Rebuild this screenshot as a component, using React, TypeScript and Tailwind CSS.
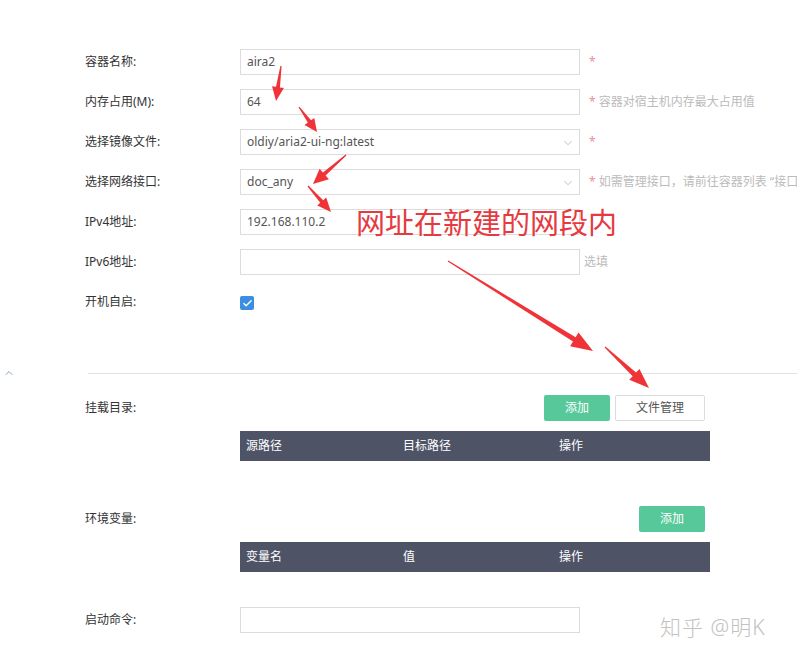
import { ChevronDown, ChevronUp, Check } from 'lucide-react'

const FONT = { fontFamily: '"Noto Sans", "Noto Sans CJK SC", sans-serif' }

type Arrow = { x1: number; y1: number; x2: number; y2: number; head: number; hw: number; sw: number }

// red annotation arrows drawn over the form
const ARROWS: Arrow[] = [
  { x1: 281, y1: 66, x2: 276, y2: 101, head: 14, hw: 12, sw: 4 },
  { x1: 299, y1: 107, x2: 317, y2: 132, head: 13, hw: 12, sw: 4 },
  { x1: 346, y1: 155, x2: 313, y2: 184, head: 15, hw: 14, sw: 4 },
  { x1: 308, y1: 186, x2: 331, y2: 212, head: 14, hw: 12, sw: 4 },
  { x1: 448, y1: 261, x2: 593, y2: 351, head: 22, hw: 16, sw: 5 },
  { x1: 605, y1: 347, x2: 649, y2: 388, head: 20, hw: 15, sw: 5 },
]

function arrowPoints(a: Arrow) {
  const dx = a.x2 - a.x1
  const dy = a.y2 - a.y1
  const len = Math.hypot(dx, dy)
  const ux = dx / len
  const uy = dy / len
  const nx = -uy
  const ny = ux
  const bx = a.x2 - ux * a.head
  const by = a.y2 - uy * a.head
  const pts = [
    [a.x1 + nx * 0.6, a.y1 + ny * 0.6],
    [bx + (nx * a.sw) / 2, by + (ny * a.sw) / 2],
    [bx + (nx * a.hw) / 2, by + (ny * a.hw) / 2],
    [a.x2, a.y2],
    [bx - (nx * a.hw) / 2, by - (ny * a.hw) / 2],
    [bx - (nx * a.sw) / 2, by - (ny * a.sw) / 2],
    [a.x1 - nx * 0.6, a.y1 - ny * 0.6],
  ]
  return pts.map(p => p.join(',')).join(' ')
}

function Label({ children }: { children: React.ReactNode }) {
  return <div className="w-[155px] shrink-0 text-[12px] text-[#333]">{children}</div>
}

function Field({
  label,
  value,
  select,
  hint,
}: {
  label: string
  value?: string
  select?: boolean
  hint?: React.ReactNode
}) {
  return (
    <div className="flex items-center h-[26px]">
      <Label>{label}</Label>
      <div className="relative w-[340px] h-[26px] shrink-0 border border-[#dcdcdc] bg-white flex items-center pl-[6px] text-[12px] text-[#555]">
        {value}
        {select && (
          <ChevronDown className="absolute right-[4px] top-[6px] text-[#a8a8a8]" size={14} strokeWidth={1.2} />
        )}
      </div>
      {hint && <div className="ml-[9px] text-[12px] text-[#bbb] whitespace-nowrap">{hint}</div>}
    </div>
  )
}

const Star = () => <span className="text-[#ee8d9a]">*</span>

export default function App() {
  return (
    <div className="relative w-[797px] h-[661px] overflow-hidden bg-white" style={FONT}>
      <div className="pl-[85px] pt-[49px] flex flex-col gap-[14px]">
        <Field label="容器名称:" value="aira2" hint={<Star />} />
        <Field label="内存占用(M):" value="64" hint={<><Star /> 容器对宿主机内存最大占用值</>} />
        <Field label="选择镜像文件:" value="oldiy/aria2-ui-ng:latest" select hint={<Star />} />
        <Field
          label="选择网络接口:"
          value="doc_any"
          select
          hint={<><Star /> 如需管理接口，请前往容器列表 “接口</>}
        />
        <Field label="IPv4地址:" value="192.168.110.2" />
        <div className="flex items-center h-[26px]">
          <Label>IPv6地址:</Label>
          <div className="w-[340px] h-[26px] shrink-0 border border-[#dcdcdc]" />
          <div className="ml-[4px] text-[12px] text-[#bbb]">选填</div>
        </div>
        <div className="flex items-center h-[26px]">
          <Label>开机自启:</Label>
          <div className="w-[14px] h-[14px] mt-[2px] rounded-[2px] bg-[#3c8ee0] flex items-center justify-center">
            <Check size={11} strokeWidth={3} className="text-white" />
          </div>
        </div>
      </div>

      <div className="flex items-center mt-[57px] h-[2px]">
        <ChevronUp size={12} strokeWidth={2} className="ml-[3px] text-[#7fa6c9]" />
        <div className="ml-[73px] flex-1 h-px bg-[#e2e2e2]" />
      </div>

      {/* 挂载目录 */}
      <div className="pl-[85px] mt-[21px] flex items-center h-[26px]">
        <Label>挂载目录:</Label>
        <div className="w-[470px] flex justify-end gap-[5px] pr-[5px]">
          <button className="w-[66px] h-[26px] rounded-[2px] bg-[#57c89a] text-white text-[12px]">添加</button>
          <button className="w-[90px] h-[26px] rounded-[2px] border border-[#dcdcdc] bg-white text-[#555] text-[12px]">
            文件管理
          </button>
        </div>
      </div>
      <div className="ml-[240px] mt-[10px] w-[470px] h-[30px] bg-[#4e5366] grid grid-cols-[157px_156px_1fr] items-center pl-[6px] text-[12px] text-white">
        <span>源路径</span>
        <span>目标路径</span>
        <span>操作</span>
      </div>

      {/* 环境变量 */}
      <div className="pl-[85px] mt-[45px] flex items-center h-[26px]">
        <Label>环境变量:</Label>
        <div className="w-[470px] flex justify-end pr-[5px]">
          <button className="w-[66px] h-[26px] rounded-[2px] bg-[#57c89a] text-white text-[12px]">添加</button>
        </div>
      </div>
      <div className="ml-[240px] mt-[10px] w-[470px] h-[30px] bg-[#4e5366] grid grid-cols-[157px_156px_1fr] items-center pl-[6px] text-[12px] text-white">
        <span>变量名</span>
        <span>值</span>
        <span>操作</span>
      </div>

      <div className="pl-[85px] mt-[35px]">
        <Field label="启动命令:" />
      </div>

      {/* annotation overlay */}
      <div className="absolute left-[356px] top-[205px] text-[29px] leading-[36px] text-[#e53a3f] whitespace-nowrap">
        网址在新建的网段内
      </div>
      <svg className="absolute left-0 top-0 pointer-events-none" width={797} height={661}>
        {ARROWS.map((a, i) => (
          <polygon key={i} points={arrowPoints(a)} fill="#ef3338" />
        ))}
      </svg>

      <div className="absolute left-[660px] top-[612px] text-[21px] tracking-[1px] font-light text-[#c2c2c2] whitespace-nowrap">
        知乎 @明K
      </div>
    </div>
  )
}
